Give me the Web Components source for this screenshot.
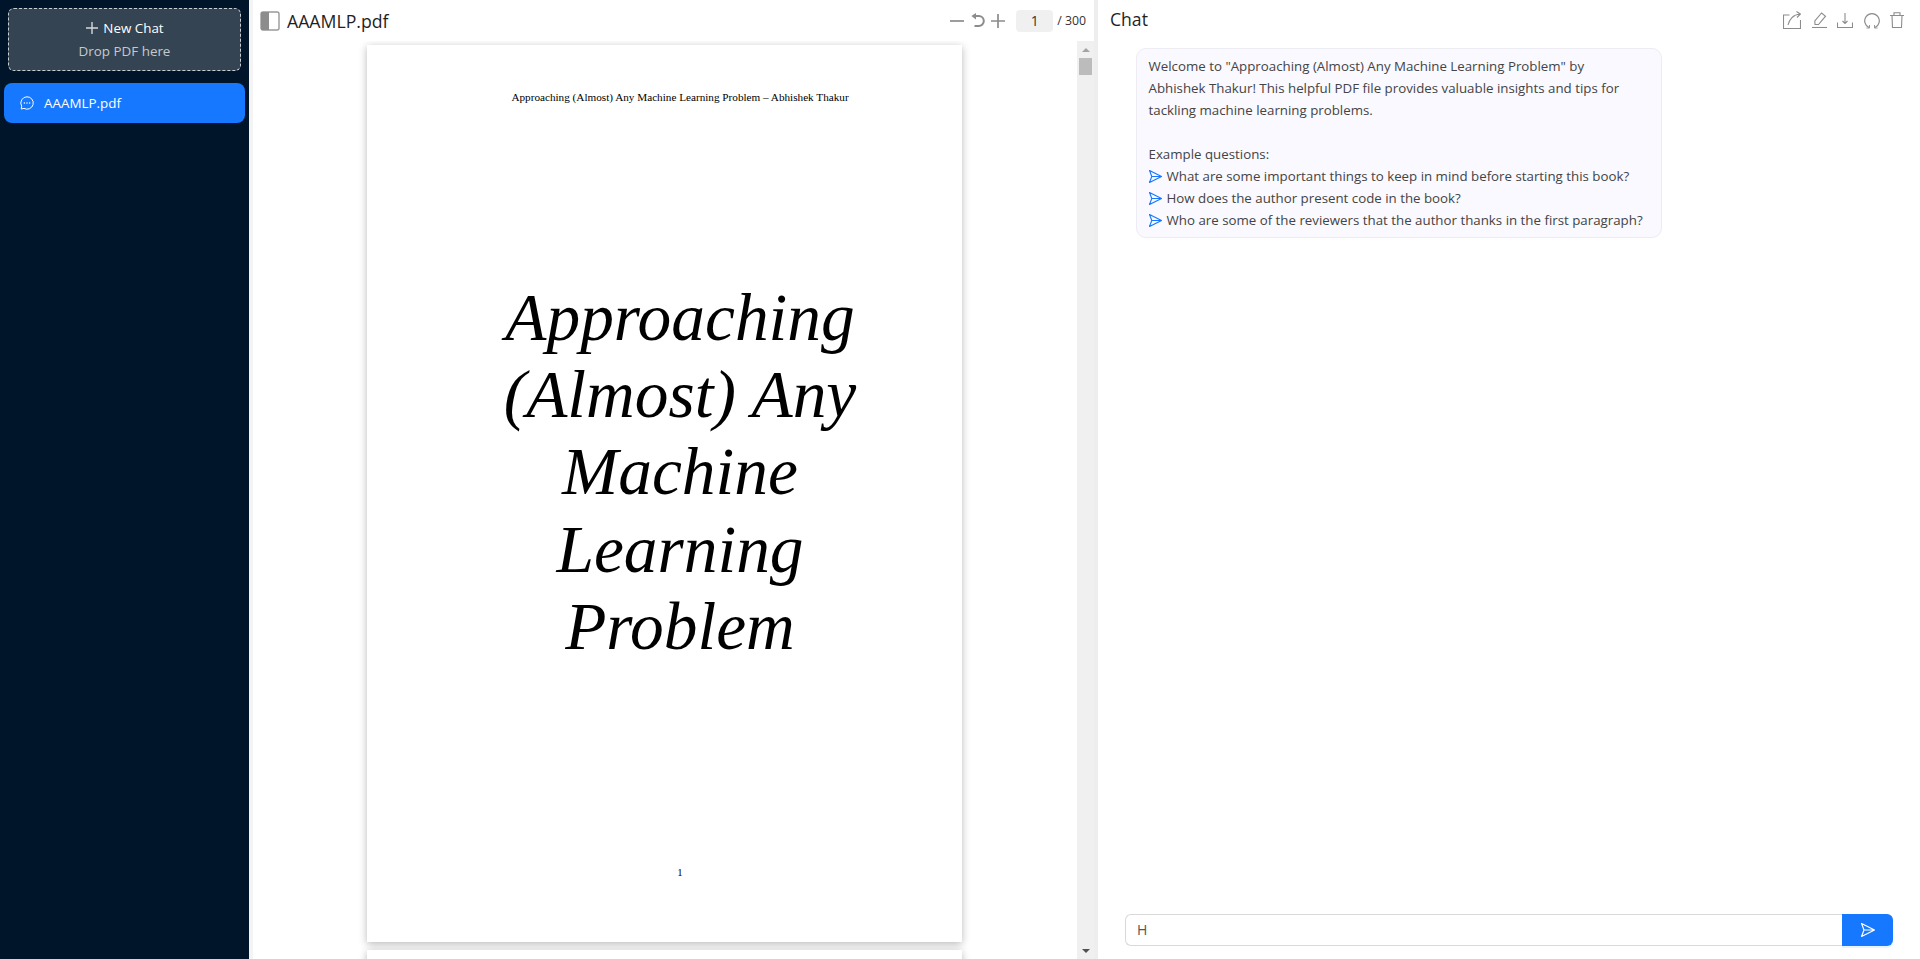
<!DOCTYPE html>
<html><head><meta charset="utf-8"><style>
html,body{margin:0;height:100%;overflow:hidden;background:#fff}
body{font-family:"Open Sans","Noto Sans",sans-serif}
</style></head><body>
<app-shell>
  <chat-sidebar slot="side"></chat-sidebar>
  <pdf-viewer slot="pdf"></pdf-viewer>
  <chat-pane slot="chat"></chat-pane>
</app-shell>
<script>
const SEND='<path d="M1.5 1.5 14.5 8 1.5 14.5 4 8Z M4 8H14.5" fill="none" stroke="currentColor" stroke-width="1.2" stroke-linejoin="round"/>';
function def(name,html){customElements.define(name,class extends HTMLElement{constructor(){super();this.attachShadow({mode:'open'}).innerHTML=html}})}
def('app-shell',`<style>:host{display:flex;height:100vh;width:100%;overflow:hidden}
.a{width:249px;flex:none}.b{flex:1;min-width:0;display:flex}.c{width:822px;flex:none;display:flex}</style>
<div class="a"><slot name="side"></slot></div><div class="b"><slot name="pdf"></slot></div><div class="c"><slot name="chat"></slot></div>`);
def('chat-sidebar',`<style>:host{display:flex;flex-direction:column;height:100%;background:#001529;box-sizing:border-box;padding:8px 4px 0;color:#fff;font-size:13.4px}
.new{margin:0 4px;height:63px;box-sizing:border-box;border:1px dashed #c9ced3;border-radius:6px;background:#354452;display:flex;flex-direction:column;align-items:center;justify-content:center;line-height:22px}
.t{display:flex;align-items:center;gap:4px;color:#fff}.d{color:#c4c9ce;margin-top:1px}
.item{margin-top:12px;height:40px;border-radius:8px;background:#1677ff;display:flex;align-items:center;padding-left:16px;gap:10px}
svg{display:block}</style>
<div class="new"><div class="t"><svg width="14" height="14" viewBox="0 0 14 14"><path d="M7 1V13M1 7H13" stroke="#d5d8db" stroke-width="1.4"/></svg><span>New Chat</span></div><div class="d">Drop PDF here</div></div>
<div class="item"><svg width="14" height="14" viewBox="0 0 14 14" fill="none" stroke="#fff" stroke-width="1"><path d="M7 .8A6.2 6.2 0 1 1 4 12.4L1.2 13 1.7 10.2A6.2 6.2 0 0 1 7 .8Z"/><g fill="#fff" stroke="none"><circle cx="4.4" cy="7" r=".75"/><circle cx="7" cy="7" r=".75"/><circle cx="9.6" cy="7" r=".75"/></g></svg><span>AAAMLP.pdf</span></div>`);
def('pdf-toolbar',`<style>:host{display:flex;align-items:center;height:41px;flex:none;padding:0 8px 0 7px;background:#fff;color:#1f1f1f}
.name{font-size:17.7px;margin-left:7px}.sp{flex:1}
svg{display:block;flex:none}.n{width:37px;height:22px;margin-left:11px;background:#f0f0f0;border-radius:4px;font-size:14px;text-align:center;line-height:22px;color:#333}
.tot{font-size:12.3px;margin-left:4px;color:#333}.g{display:flex;gap:6.5px;align-items:center}</style>
<svg width="20" height="20" viewBox="0 0 20 20"><rect x="1" y="1" width="18" height="18" rx="2" fill="#fff" stroke="#999" stroke-width="1.4"/><rect x="1" y="1" width="8" height="18" fill="#8c8c8c"/></svg>
<span class="name">AAAMLP.pdf</span><span class="sp"></span>
<div class="g"><svg width="14" height="14" viewBox="0 0 14 14"><path d="M0 7H14" stroke="#8c8c8c" stroke-width="1.7"/></svg>
<svg width="14" height="15" viewBox="0 0 14 15" fill="none" stroke="#8c8c8c" stroke-width="2"><path d="M3.5 3H7.8A5 5 0 0 1 7.8 13H3.5"/><path d="M5 .1 .4 3 5 6.4Z" fill="#8c8c8c" stroke="none"/></svg>
<svg width="14" height="14" viewBox="0 0 14 14"><path d="M0 7H14M7 0V14" stroke="#8c8c8c" stroke-width="1.7"/></svg></div>
<span class="n">1</span><span class="tot">/ 300</span>`);
def('pdf-page',`<style>:host{display:block;width:595px;height:897px;background:#fff;box-shadow:0 2px 8px rgba(0,0,0,.28);font-family:"Liberation Serif",serif;color:#000;flex:none;box-sizing:border-box;padding-left:32px}
:host([blank]){height:40px;margin-top:8px}</style>
<slot></slot>`);
def('pdf-first',`<style>:host{display:block;height:100%}
.h{font-size:11.2px;text-align:center;padding-top:46px;line-height:12px;height:58px;box-sizing:border-box}
.title{font-size:67.4px;font-style:italic;line-height:77.2px;text-align:center;margin-top:176px;padding:0 60px}
.p{font-size:10.7px;text-align:center;margin-top:201px;line-height:12px}</style>
<div class="h">Approaching (Almost) Any Machine Learning Problem – Abhishek Thakur</div>
<div class="title">Approaching (Almost) Any Machine Learning Problem</div>
<div class="p">1</div>`);
def('pdf-scrollbar',`<style>:host{display:flex;flex-direction:column;width:17px;flex:none;background:#f0f0f0;align-items:center}
.up,.dn{height:17px;flex:none;display:flex;align-items:center;justify-content:center}
.th{width:13px;height:17px;background:#bcbcbc}.sp{flex:1}
i{display:block;width:0;height:0;border-left:4px solid transparent;border-right:4px solid transparent}
.up i{border-bottom:4px solid #a3a3a3}.dn i{border-top:4px solid #505050}</style>
<div class="up"><i></i></div><div class="th"></div><div class="sp"></div><div class="dn"><i></i></div>`);
def('pdf-viewer',`<style>:host{display:flex;flex-direction:column;flex:1;min-width:0;border-left:4px solid #f4f4f4;border-right:4px solid #eeeeee;height:100%;box-sizing:border-box}
.b{flex:1;min-height:0;display:flex}.s{flex:1;min-width:0;overflow:hidden;display:flex;flex-direction:column;align-items:center;padding:4px 0 0}
.w{width:595px;margin-left:-2px;display:flex;flex-direction:column}</style>
<pdf-toolbar></pdf-toolbar><div class="b"><div class="s"><div class="w"><pdf-page><pdf-first></pdf-first></pdf-page><pdf-page blank></pdf-page></div></div><pdf-scrollbar></pdf-scrollbar></div>`);
def('chat-message',`<style>:host{display:block;width:526px;box-sizing:border-box;background:#f9f9ff;border:1px solid #ececf2;border-radius:10px;padding:6px 0 6px 12px;font-size:13.3px;line-height:22px;color:#444}
.q{display:flex;align-items:center;gap:5px;white-space:nowrap}svg{color:#1677ff;flex:none;display:block}</style>
<div>Welcome to "Approaching (Almost) Any Machine Learning Problem" by<br>Abhishek Thakur! This helpful PDF file provides valuable insights and tips for<br>tackling machine learning problems.<br><br>Example questions:</div>
<div class="q"><svg width="13" height="13" viewBox="1 1 14 14">${SEND}</svg>What are some important things to keep in mind before starting this book?</div>
<div class="q"><svg width="13" height="13" viewBox="1 1 14 14">${SEND}</svg>How does the author present code in the book?</div>
<div class="q"><svg width="13" height="13" viewBox="1 1 14 14">${SEND}</svg>Who are some of the reviewers that the author thanks in the first paragraph?</div>`);
def('chat-input',`<style>:host{display:flex;height:32px;flex:none;font-size:14px}
.f{flex:1;border:1px solid #d9d9d9;border-right:0;border-radius:6px 0 0 6px;box-sizing:border-box;padding-left:11px;line-height:30px;color:#555}
.b{width:51px;background:#1677ff;border-radius:0 6px 6px 0;display:flex;align-items:center;justify-content:center;color:#fff;box-shadow:0 2px 0 rgba(5,145,255,.1)}svg{display:block}</style>
<div class="f">H</div><div class="b"><svg width="14" height="14" viewBox="1 1 14 14">${SEND}</svg></div>`);
def('chat-pane',`<style>:host{display:flex;flex-direction:column;flex:1;height:100%;background:#fff;box-sizing:border-box}
.top{height:40px;flex:none;display:flex;align-items:center;padding:0 16px 0 12px}
.ttl{font-size:17.6px;color:#1f1f1f;font-weight:500;position:relative;top:-1px}.sp{flex:1}
.ic{display:flex;gap:10.5px;align-items:center}svg{display:block;color:#8c8c8c}
.body{flex:1;min-height:0;padding:8px 0 0 37.5px}.in{padding:0 27px 13px 27px}</style>
<div class="top"><span class="ttl">Chat</span><span class="sp"></span><div class="ic">
<svg width="18" height="18" viewBox="0 0 18 18" fill="none" stroke="currentColor" stroke-width="1.1"><path d="M6.5 4H.5V17.5H17.5V9"/><path d="M5 14C6 9 10 3.5 17 3M13.5 .5 17.5 3 14 6.5"/></svg>
<svg width="15" height="16" viewBox="0 0 15 16" fill="none" stroke="currentColor" stroke-width="1.1"><path d="M0 15.5H15"/><path d="M3 12.5 2.8 9 9.6 1 13.5 4.2 6.5 12.5Z"/></svg>
<svg width="16" height="16" viewBox="0 0 16 16" fill="none" stroke="currentColor" stroke-width="1.1"><path d="M.5 10.5V15.5H15.5V10.5"/><path d="M8 1V11.5M5.5 9 8 11.5 10.5 9"/></svg>
<svg width="16" height="17" viewBox="0 0 16 17" fill="none" stroke="currentColor" stroke-width="1.2"><path d="M5 15.5A7.3 7.3 0 1 1 11 15.5"/><path d="M5.5 13V16H2.5M10.5 13V16H13.5" stroke-width=".9"/></svg>
<svg width="14" height="16" viewBox="0 0 14 16" fill="none" stroke="currentColor" stroke-width="1.1"><path d="M0 3.5H14M4 3.5V.8H10V3.5M2 3.5 2.5 15.5H11.5L12 3.5"/></svg>
</div></div>
<div class="body"><chat-message></chat-message></div><div class="in"><chat-input></chat-input></div>`);
</script></body></html>
